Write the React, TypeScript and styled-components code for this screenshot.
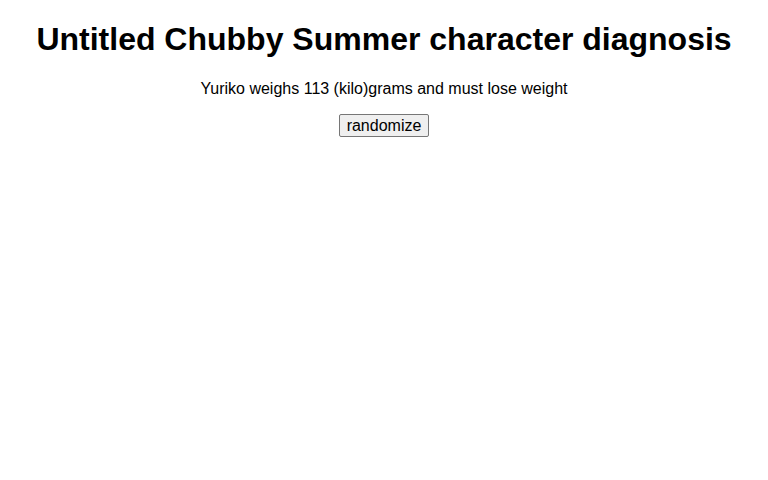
import React from "react";
import styled, { createGlobalStyle } from "styled-components";

const Global = createGlobalStyle`
  html, body { background: #ffffff; }
  body {
    margin: 0;
    padding: 0 8px;
    font-family: "Liberation Sans", Arial, sans-serif;
    color: #000000;
  }
`;

const Page = styled.main`
  text-align: center;
`;

const Title = styled.h1`
  font-size: 32px;
  font-weight: bold;
  margin: 21.44px 0;
`;

const Result = styled.p`
  font-size: 16px;
  margin: 16px 0;
`;

const Button = styled.button`
  font-family: "Liberation Sans", Arial, sans-serif;
  font-size: 16px;
  line-height: 19px;
  color: #000000;
  background: #efefef;
  border: 1px solid #767676;
  border-radius: 2px;
  padding: 1px 7px;
  height: 23px;
  cursor: pointer;
`;

export default function App() {
  return (
    <>
      <Global />
      <Page>
        <Title>Untitled Chubby Summer character diagnosis</Title>
        <Result>Yuriko weighs 113 (kilo)grams and must lose weight</Result>
        <Button>randomize</Button>
      </Page>
    </>
  );
}
